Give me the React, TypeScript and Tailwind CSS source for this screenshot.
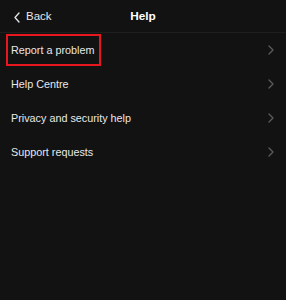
const items = ["Report a problem", "Help Centre", "Privacy and security help", "Support requests"];

const Chevron = ({ className }: { className?: string }) => (
    <svg width="6" height="10" viewBox="0 0 6 10" fill="none" className={className}>
        <polyline points="1,1 5,5 1,9" stroke="currentColor" strokeWidth="1.3" strokeLinecap="round" strokeLinejoin="round" />
    </svg>
);

const App = () => {
    return (
        <div
            className="h-[300px] w-[286px] bg-[#121212] text-[#ececec]"
            style={{ fontFamily: '"Liberation Sans", Arial, sans-serif' }}
        >
            {/* HEADER */}
            <div className="relative flex h-[33px] items-center border-b border-[#1e1e1e] pt-[2px]">
                <div className="flex items-center gap-[6px] pl-[14px] text-[11.5px] text-[#e6e6e6]">
                    <svg width="6" height="11" viewBox="0 0 6 11" fill="none">
                        <polyline points="5,1 1,5.5 5,10" stroke="currentColor" strokeWidth="1.3" strokeLinecap="round" strokeLinejoin="round" />
                    </svg>
                    Back
                </div>
                <div className="absolute inset-x-0 text-center text-[11.8px] font-bold text-white">Help</div>
            </div>

            {/* LIST */}
            <div className="flex flex-col">
                {items.map((label, i) => (
                    <div key={label} className="flex h-[34px] items-center justify-between pl-[11px] pr-[12px]">
                        <span className="relative text-[10.8px] text-[#e8e8e8]">
                            {label}
                            {i === 0 && (
                                <span className="absolute -left-[5px] -right-[7px] -top-[8px] -bottom-[8px] border-2 border-[#e8161f]" />
                            )}
                        </span>
                        <Chevron className="text-[#5c5c5c]" />
                    </div>
                ))}
            </div>
        </div>
    );
};

export default App;
